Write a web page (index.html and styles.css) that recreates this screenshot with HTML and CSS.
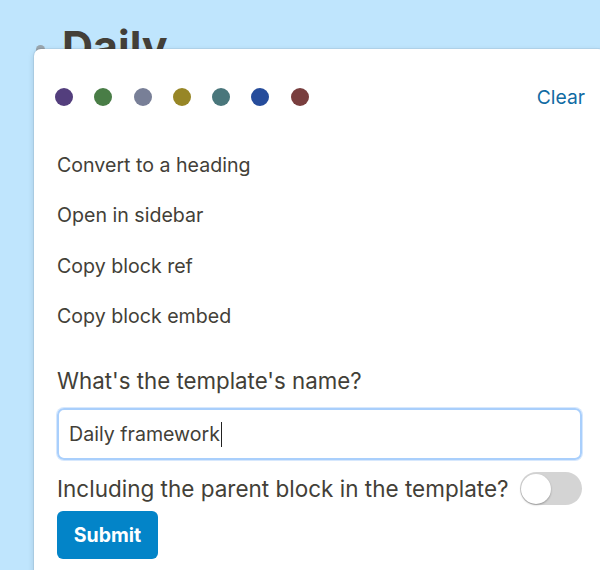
FILE: index.html
```html
<!DOCTYPE html>
<html>
<head>
<meta charset="utf-8">
<link rel="stylesheet" href="styles.css">
</head>
<body>
<div class="page">
  <div class="block">
    <span class="bullet"></span>
    <h1 class="title">Daily</h1>
  </div>
  <div class="popover">
    <div class="colors">
      <div class="dots">
        <span class="dot c1"></span>
        <span class="dot c2"></span>
        <span class="dot c3"></span>
        <span class="dot c4"></span>
        <span class="dot c5"></span>
        <span class="dot c6"></span>
        <span class="dot c7"></span>
      </div>
      <a class="clear">Clear</a>
    </div>
    <ul class="menu">
      <li>Convert to a heading</li>
      <li>Open in sidebar</li>
      <li>Copy block ref</li>
      <li>Copy block embed</li>
    </ul>
    <div class="form">
      <div class="label">What's the template's name?</div>
      <div class="input"><span>Daily framework</span><span class="caret"></span></div>
      <div class="row">
        <span class="label">Including the parent block in the template?</span>
        <span class="toggle"><span class="knob"></span></span>
      </div>
      <button class="submit">Submit</button>
    </div>
  </div>
</div>
</body>
</html>
```
FILE: styles.css
```css
html, body {
  margin: 0;
  padding: 0;
  background: #bfe5fd;
  font-family: Inter, "Noto Sans", sans-serif;
  color: #433f38;
}
.page {
  position: relative;
  width: 600px;
  height: 570px;
  overflow: hidden;
}
.block {
  display: flex;
  align-items: flex-start;
  padding: 21px 0 0 36px;
}
.bullet {
  width: 9px;
  height: 9px;
  border-radius: 50%;
  background: #9aa6ae;
  margin-top: 24px;
  margin-right: 17px;
}
.title {
  margin: 0;
  font-size: 43px;
  font-weight: 700;
  line-height: 50px;
  color: #433f38;
}
.popover {
  position: absolute;
  left: 34px;
  top: 49px;
  width: 525px;
  height: 540px;
  padding: 0 23px;
  background: #fff;
  border-radius: 7px;
  box-shadow: 0 0 0 1px rgba(16, 22, 26, 0.06), 0 2px 6px rgba(16, 22, 26, 0.15);
}
.colors {
  display: flex;
  align-items: center;
  justify-content: space-between;
  height: 34px;
  margin-top: 31px;
}
.dots {
  display: flex;
  gap: 21.3px;
  margin-left: -2px;
}
.dot {
  width: 18px;
  height: 18px;
  border-radius: 50%;
}
.c1 { background: #533e7d; }
.c2 { background: #497d46; }
.c3 { background: #787f97; }
.c4 { background: #978626; }
.c5 { background: #49767b; }
.c6 { background: #264c9b; }
.c7 { background: #793e3e; }
.clear {
  font-size: 19.3px;
  color: #106ba3;
  margin-right: -3px;
}
.menu {
  list-style: none;
  margin: 25.5px 0 0;
  padding: 0;
}
.menu li {
  font-size: 19.6px;
  line-height: 50.5px;
}
.form {
  display: flex;
  flex-direction: column;
  align-items: flex-start;
  margin-top: 24.5px;
}
.label {
  font-size: 22.3px;
  line-height: 30px;
}
.row .label {
  font-size: 22.5px;
}
.input {
  box-sizing: border-box;
  width: 525px;
  height: 52px;
  margin-top: 12px;
  border: 2px solid #a9cffc;
  border-radius: 7px;
  box-shadow: 0 0 0 1px #d7e8fd;
  display: flex;
  align-items: center;
  padding-left: 10px;
  font-size: 19.6px;
}
.caret {
  width: 1px;
  height: 25px;
  background: #222;
  margin-left: 1px;
}
.row {
  display: flex;
  align-items: center;
  justify-content: space-between;
  width: 525px;
  margin-top: 12px;
}
.toggle {
  position: relative;
  width: 62px;
  height: 33px;
  border-radius: 17px;
  background: #d4d4d4;
}
.knob {
  position: absolute;
  left: 1px;
  top: 1.5px;
  width: 30px;
  height: 30px;
  border-radius: 50%;
  background: #fff;
  box-shadow: 0 1px 2px rgba(0, 0, 0, 0.3);
}
.submit {
  margin-top: 6px;
  width: 101px;
  height: 48px;
  border: none;
  border-radius: 6px;
  background: #0384c8;
  color: #fff;
  font-family: Inter, "Noto Sans", sans-serif;
  font-size: 19.5px;
  font-weight: 700;
}
```
